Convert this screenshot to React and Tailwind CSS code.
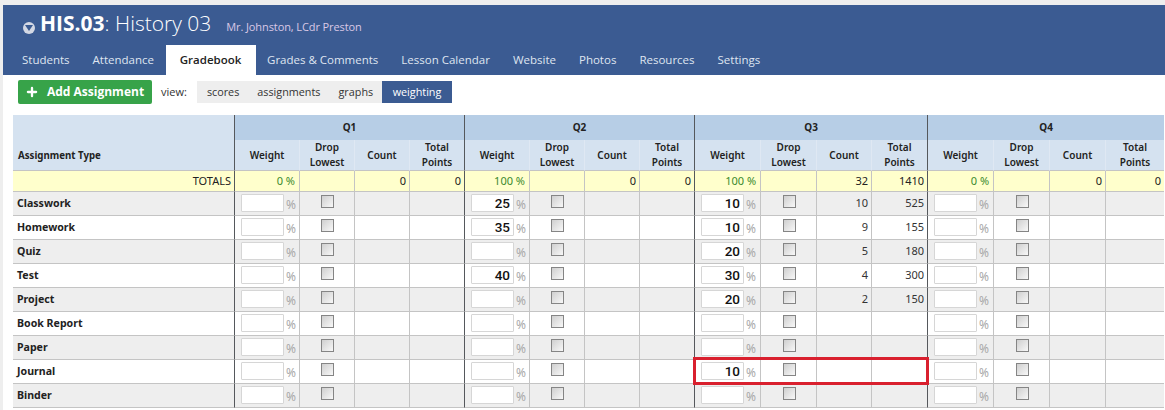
import React from 'react';
import { Plus } from 'lucide-react';

const tabs = ['Students', 'Attendance', 'Gradebook', 'Grades & Comments', 'Lesson Calendar', 'Website', 'Photos', 'Resources', 'Settings'];
const views = ['scores', 'assignments', 'graphs', 'weighting'];

const quarters = [
  { name: 'Q1', weight: '0', count: '0', total: '0', widths: [65, 55, 55, 55] },
  { name: 'Q2', weight: '100', count: '0', total: '0', widths: [65, 55, 55, 55] },
  { name: 'Q3', weight: '100', count: '32', total: '1410', widths: [66, 56, 55, 56] },
  { name: 'Q4', weight: '0', count: '0', total: '0', widths: [66, 56, 56, 59] },
];

const rows = [
  { name: 'Classwork', q2: '25', q3: '10', count: '10', total: '525' },
  { name: 'Homework', q2: '35', q3: '10', count: '9', total: '155' },
  { name: 'Quiz', q2: '', q3: '20', count: '5', total: '180' },
  { name: 'Test', q2: '40', q3: '30', count: '4', total: '300' },
  { name: 'Project', q2: '', q3: '20', count: '2', total: '150' },
  { name: 'Book Report', q2: '', q3: '', count: '', total: '' },
  { name: 'Paper', q2: '', q3: '', count: '', total: '' },
  { name: 'Journal', q2: '', q3: '10', count: '', total: '' },
  { name: 'Binder', q2: '', q3: '', count: '', total: '' },
];

const WeightCell = ({ value }) => (
  <td className="border-l border-l-[#55585c] border-b border-b-[#c4c4c4] p-0 align-top">
    <div className="flex items-start pl-[6px] pt-[2px]">
      <div className="w-[43px] h-[18px] rounded-[1px] bg-white border border-[#d6d6d6] text-right pr-[3px] text-[13.5px] leading-[17px] font-medium text-[#111] font-['Roboto',sans-serif]">
        {value}
      </div>
      <span className="ml-[2px] mt-[4px] text-[12px] leading-[14px] text-[#a8a8a8]">%</span>
    </div>
  </td>
);

const CheckCell = () => (
  <td className="border-l border-l-[#c4c4c4] border-b border-b-[#c4c4c4] p-0 align-top">
    <div className="flex justify-center pt-[3px] pl-[1px]">
      <div className="w-[13px] h-[13px] border border-[#858585] bg-gradient-to-br from-[#cfcfcf] to-[#f8f8f8]" />
    </div>
  </td>
);

const NumCell = ({ value }) => (
  <td className="border-l border-l-[#c4c4c4] border-b border-b-[#c4c4c4] p-0 pr-[3px] text-right text-[11px] text-[#333]">
    {value}
  </td>
);

const App = () => {
  return (
    <div className="relative h-[410px] w-[1165px] overflow-hidden bg-white font-['Open_Sans',sans-serif]">
      <div className="h-[5px] bg-[#eeeeee]" />
      <div className="flex">
        <div className="w-[3px] h-[405px] bg-[#eeeeee] shrink-0" />
        <div className="flex-1 min-w-0">
          {/* Header */}
          <div className="bg-[#3b5b92] h-[70px]">
            <div className="flex items-baseline h-[40px] pl-[20px] pt-[3px] text-white">
              <span className="self-center w-[12px] h-[12px] mr-[5px] mt-[2px] rounded-full bg-[#d3d8e4] flex items-center justify-center">
                <svg width="8" height="6" viewBox="0 0 8 6">
                  <polygon points="0,0 8,0 4,6" fill="#3b5b92" />
                </svg>
              </span>
              <span className="text-[21px] font-bold leading-[30px]">HIS.03</span>
              <span className="text-[21px] font-light leading-[30px]">: History 03</span>
              <span className="ml-[15px] text-[11px] tracking-[-0.1px] text-[#d9c8e6]">Mr. Johnston, LCdr Preston</span>
            </div>
            <div className="flex h-[30px] items-stretch pl-[7.5px] text-[11.5px] text-[#dfe5f0]">
              {tabs.map((tab) =>
                tab === 'Gradebook' ? (
                  <div key={tab} className="bg-white text-[#222] font-semibold w-[90px] justify-center flex items-center">{tab}</div>
                ) : (
                  <div key={tab} className="px-[11.5px] flex items-center">{tab}</div>
                )
              )}
            </div>
          </div>

          {/* Toolbar */}
          <div className="flex items-center h-[40px] pl-[15px] pb-[6px]">
            <button className="flex items-center h-[24px] w-[134px] rounded-[2px] bg-[#37a349] text-white text-[12px] font-bold pl-[7px]">
              <Plus size={14} strokeWidth={4} className="mr-[8px]" />
              Add Assignment
            </button>
            <span className="ml-[9px] text-[11px] text-[#333]">view:</span>
            <div className="flex ml-[10px] h-[22px] bg-[#eeeeee] text-[10.8px] text-[#333] items-stretch pl-[1px]">
              {views.map((v) =>
                v === 'weighting' ? (
                  <div key={v} className="bg-[#3b5b92] text-white px-[10.5px] flex items-center">{v}</div>
                ) : (
                  <div key={v} className="px-[9px] flex items-center">{v}</div>
                )
              )}
            </div>
          </div>

          {/* Weighting table */}
          <table className="ml-[10px] table-fixed border-separate border-spacing-0 w-[1151px] text-[11px] text-[#222] font-['Noto_Sans',sans-serif]">
            <colgroup>
              <col className="w-[221px]" />
              {quarters.map((q) => q.widths.map((w, i) => <col key={q.name + i} style={{ width: w }} />))}
            </colgroup>
            <thead>
              <tr className="h-[25px]">
                <th rowSpan={2} className="bg-[#d5e2f0] align-middle text-left pl-[5px] pt-[28px] text-[9.7px] font-bold border-b border-b-[#c4c4c4]">
                  Assignment Type
                </th>
                {quarters.map((q) => (
                  <th key={q.name} colSpan={4} className="bg-[#b7cee6] border-l border-l-[#55585c] text-[10px] font-bold">
                    {q.name}
                  </th>
                ))}
              </tr>
              <tr className="h-[31px]">
                {quarters.map((q) =>
                  ['Weight', 'Drop Lowest', 'Count', 'Total Points'].map((label, i) => (
                    <th
                      key={q.name + label}
                      className={`bg-[#d5e2f0] text-[10px] leading-[15px] font-semibold px-[8px] border-b border-b-[#c4c4c4] ${i === 0 ? 'border-l border-l-[#55585c]' : 'border-l border-l-[#dfe8f3]'}`}
                    >
                      {label}
                    </th>
                  ))
                )}
              </tr>
            </thead>
            <tbody>
              <tr className="h-[21px] bg-[#ffffcc] text-[11px]">
                <td className="text-right pr-[3px] border-b border-b-[#c4c4c4]">TOTALS</td>
                {quarters.map((q) => (
                  <React.Fragment key={q.name}>
                    <td className="text-right pr-[4px] text-[#3b8a2e] border-l border-l-[#55585c] border-b border-b-[#c4c4c4]">{q.weight} %</td>
                    <td className="border-l border-l-[#c4c4c4] border-b border-b-[#c4c4c4]" />
                    <td className="text-right pr-[3px] border-l border-l-[#c4c4c4] border-b border-b-[#c4c4c4]">{q.count}</td>
                    <td className="text-right pr-[3px] border-l border-l-[#c4c4c4] border-b border-b-[#c4c4c4]">{q.total}</td>
                  </React.Fragment>
                ))}
              </tr>
              {rows.map((row, idx) => (
                <tr key={row.name} className={`h-[24px] ${idx % 2 === 0 ? 'bg-[#eeeeee]' : 'bg-white'}`}>
                  <td className="pl-[4px] text-[10.6px] font-bold border-b border-b-[#c4c4c4]">{row.name}</td>
                  <WeightCell value="" />
                  <CheckCell />
                  <NumCell value="" />
                  <NumCell value="" />
                  <WeightCell value={row.q2} />
                  <CheckCell />
                  <NumCell value="" />
                  <NumCell value="" />
                  <WeightCell value={row.q3} />
                  <CheckCell />
                  <NumCell value={row.count} />
                  <NumCell value={row.total} />
                  <WeightCell value="" />
                  <CheckCell />
                  <NumCell value="" />
                  <NumCell value="" />
                </tr>
              ))}
            </tbody>
          </table>
        </div>
      </div>

      {/* Red annotation box drawn over the Journal row */}
      <div className="absolute left-[693px] top-[357px] w-[236px] h-[28px] border-[3px] border-[#d9202e] pointer-events-none" />
    </div>
  );
};

export default App;
